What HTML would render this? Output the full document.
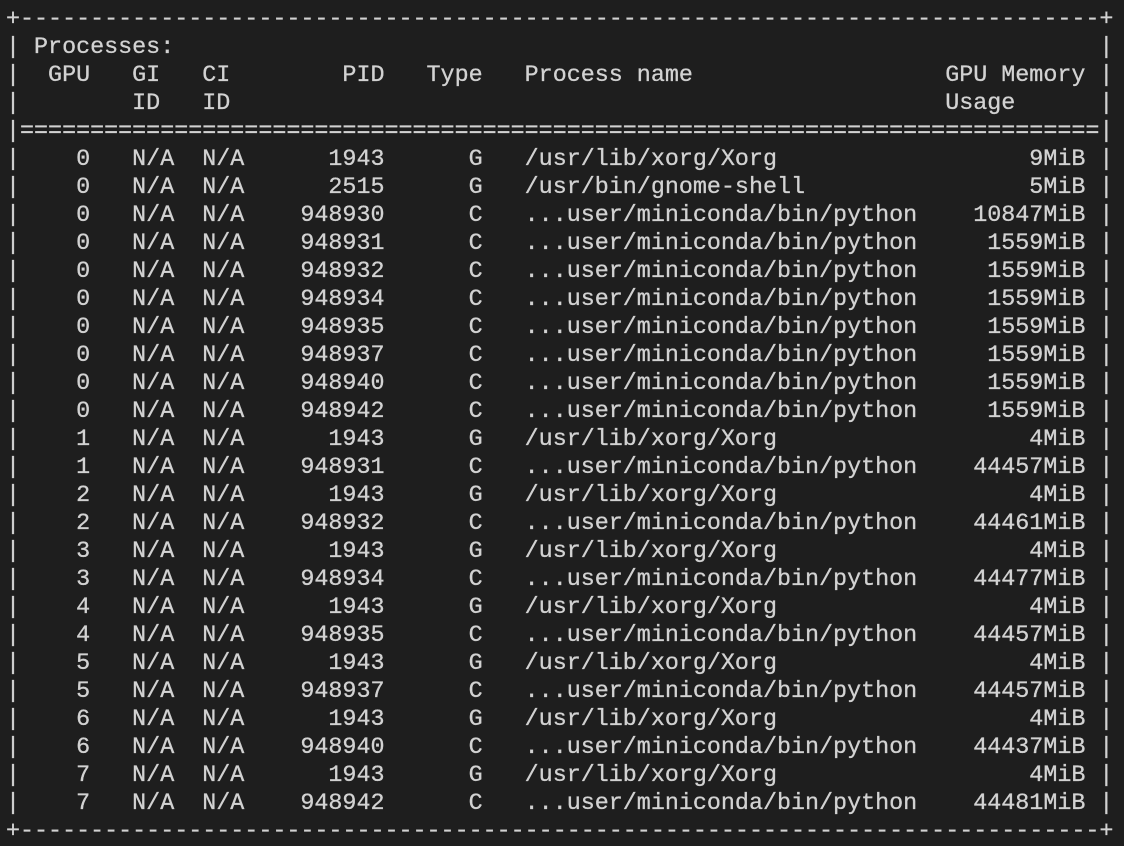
<!DOCTYPE html>
<html><head><meta charset="utf-8"><style>
html,body{margin:0;padding:0;background:#1e1e1e;width:1124px;height:842px;overflow:hidden}
pre{position:absolute;left:6px;top:6px;margin:0;font-family:"Liberation Mono",monospace;font-size:23.37px;line-height:28px;color:#d2d2d2;letter-spacing:0;-webkit-text-stroke:0.3px #d2d2d2}
</style></head><body><pre>+-----------------------------------------------------------------------------+
| Processes:                                                                  |
|  GPU   GI   CI        PID   Type   Process name                  GPU Memory |
|        ID   ID                                                   Usage      |
|=============================================================================|
|    0   N/A  N/A      1943      G   /usr/lib/xorg/Xorg                  9MiB |
|    0   N/A  N/A      2515      G   /usr/bin/gnome-shell                5MiB |
|    0   N/A  N/A    948930      C   ...user/miniconda/bin/python    10847MiB |
|    0   N/A  N/A    948931      C   ...user/miniconda/bin/python     1559MiB |
|    0   N/A  N/A    948932      C   ...user/miniconda/bin/python     1559MiB |
|    0   N/A  N/A    948934      C   ...user/miniconda/bin/python     1559MiB |
|    0   N/A  N/A    948935      C   ...user/miniconda/bin/python     1559MiB |
|    0   N/A  N/A    948937      C   ...user/miniconda/bin/python     1559MiB |
|    0   N/A  N/A    948940      C   ...user/miniconda/bin/python     1559MiB |
|    0   N/A  N/A    948942      C   ...user/miniconda/bin/python     1559MiB |
|    1   N/A  N/A      1943      G   /usr/lib/xorg/Xorg                  4MiB |
|    1   N/A  N/A    948931      C   ...user/miniconda/bin/python    44457MiB |
|    2   N/A  N/A      1943      G   /usr/lib/xorg/Xorg                  4MiB |
|    2   N/A  N/A    948932      C   ...user/miniconda/bin/python    44461MiB |
|    3   N/A  N/A      1943      G   /usr/lib/xorg/Xorg                  4MiB |
|    3   N/A  N/A    948934      C   ...user/miniconda/bin/python    44477MiB |
|    4   N/A  N/A      1943      G   /usr/lib/xorg/Xorg                  4MiB |
|    4   N/A  N/A    948935      C   ...user/miniconda/bin/python    44457MiB |
|    5   N/A  N/A      1943      G   /usr/lib/xorg/Xorg                  4MiB |
|    5   N/A  N/A    948937      C   ...user/miniconda/bin/python    44457MiB |
|    6   N/A  N/A      1943      G   /usr/lib/xorg/Xorg                  4MiB |
|    6   N/A  N/A    948940      C   ...user/miniconda/bin/python    44437MiB |
|    7   N/A  N/A      1943      G   /usr/lib/xorg/Xorg                  4MiB |
|    7   N/A  N/A    948942      C   ...user/miniconda/bin/python    44481MiB |
+-----------------------------------------------------------------------------+</pre></body></html>
